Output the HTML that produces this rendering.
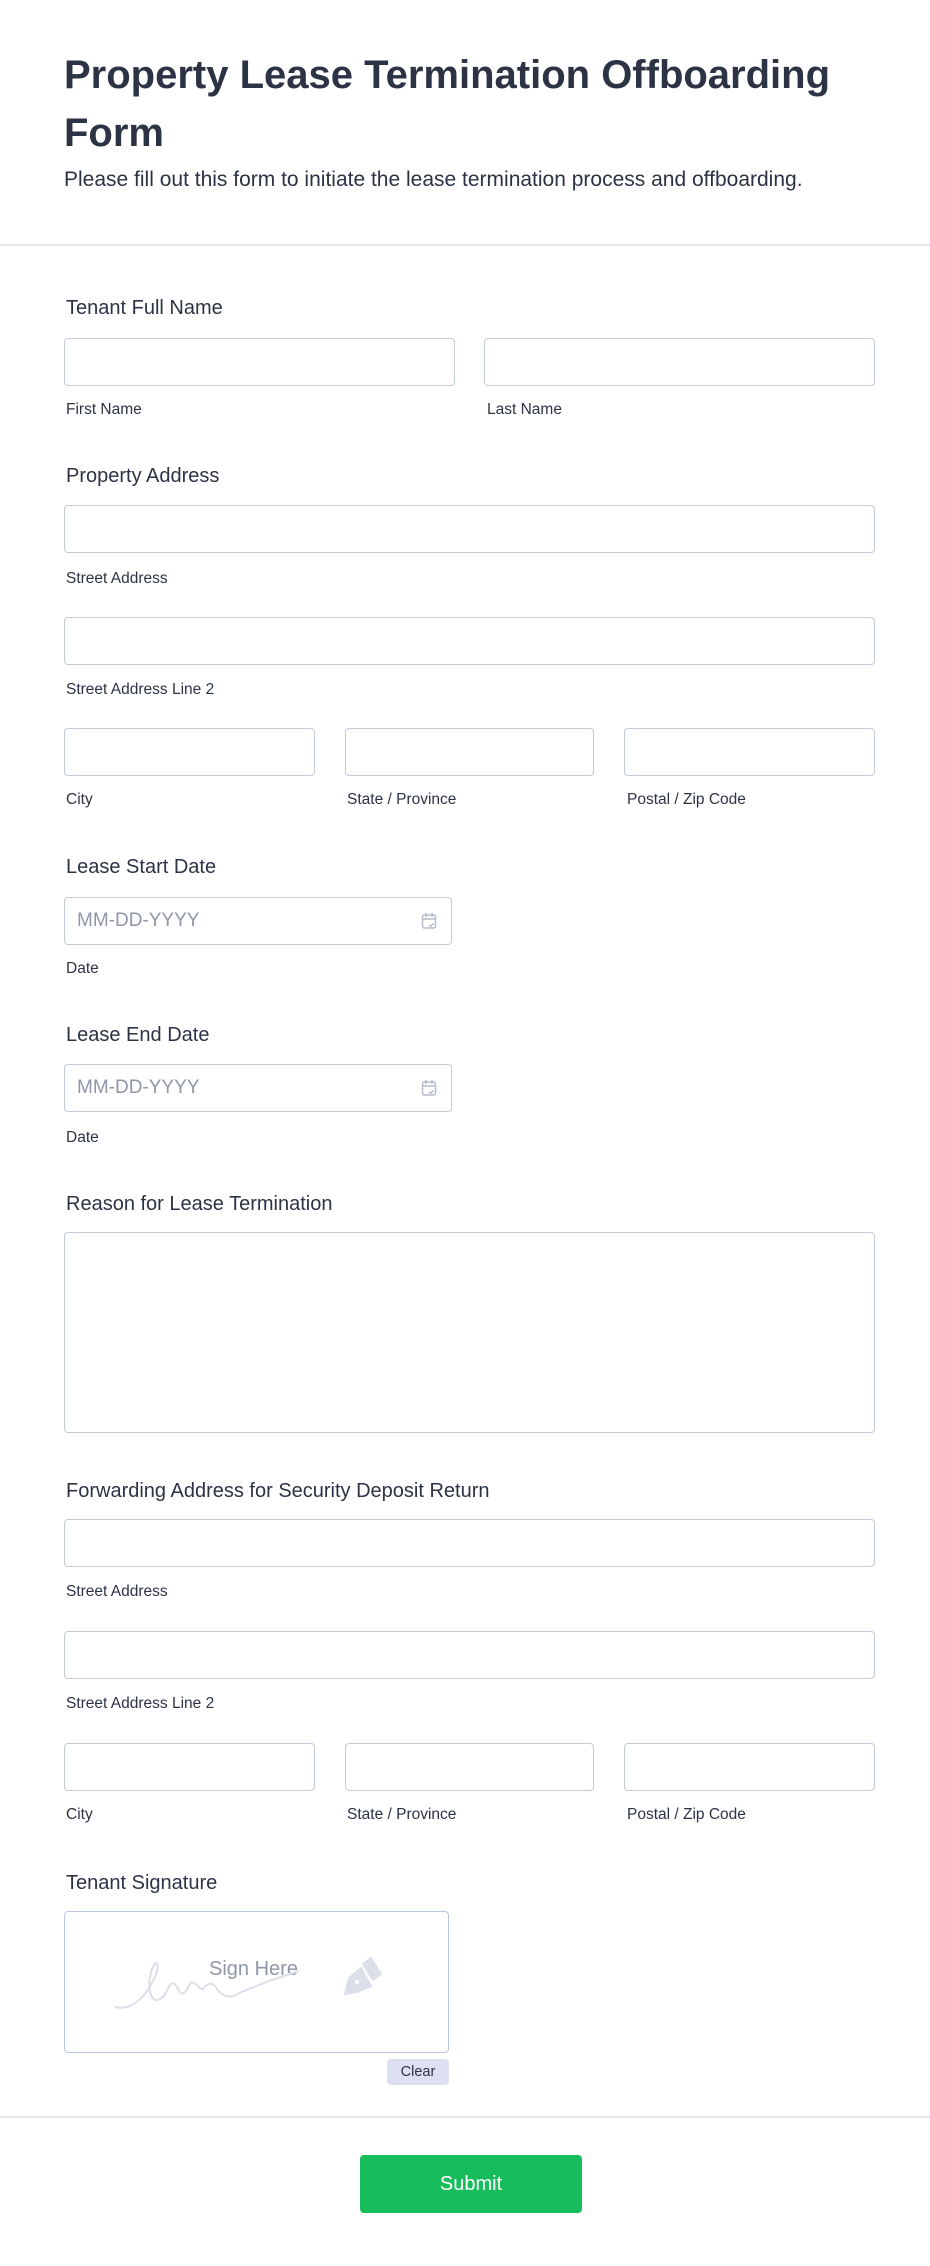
<!DOCTYPE html>
<html><head><meta charset="utf-8">
<style>
*{box-sizing:border-box;margin:0;padding:0}
body{width:930px;height:2266px;background:#fff;font-family:"Liberation Sans",Arial,sans-serif;color:#2c3345;position:relative;overflow:hidden}
.a{position:absolute}
h1{position:absolute;left:64px;top:46px;width:830px;font-size:40px;line-height:58px;font-weight:bold;color:#2c3345}
.sub{left:64px;top:166px;font-size:21px;line-height:28px;color:#2c3345}
.sep{left:0;width:930px;height:2px;background:#e3e6ee}
.lbl{font-size:20px;line-height:24px;left:66px;color:#2c3345}
.sl{font-size:15.5px;line-height:20px;color:#2c3345}
.in{border:1.5px solid #c3cad8;border-radius:4px;background:#fff}
.ph{font-size:19px;color:#8f96a8;line-height:48px;padding-left:12px}
</style></head><body>
<h1>Property Lease Termination Offboarding Form</h1>
<div class="a sub">Please fill out this form to initiate the lease termination process and offboarding.</div>
<div class="a sep" style="top:244px"></div>

<div class="a lbl" style="top:296px">Tenant Full Name</div>
<div class="a in" style="left:64px;top:338px;width:391px;height:48px"></div>
<div class="a in" style="left:484px;top:338px;width:391px;height:48px"></div>
<div class="a sl" style="left:66px;top:400px">First Name</div>
<div class="a sl" style="left:487px;top:400px">Last Name</div>

<div class="a lbl" style="top:464px">Property Address</div>
<div class="a in" style="left:64px;top:505px;width:811px;height:48px"></div>
<div class="a sl" style="left:66px;top:569px">Street Address</div>
<div class="a in" style="left:64px;top:617px;width:811px;height:48px"></div>
<div class="a sl" style="left:66px;top:680px">Street Address Line 2</div>
<div class="a in" style="left:64px;top:728px;width:251px;height:48px"></div>
<div class="a in" style="left:345px;top:728px;width:249px;height:48px"></div>
<div class="a in" style="left:624px;top:728px;width:251px;height:48px"></div>
<div class="a sl" style="left:66px;top:790px">City</div>
<div class="a sl" style="left:347px;top:790px">State / Province</div>
<div class="a sl" style="left:627px;top:790px">Postal / Zip Code</div>

<div class="a lbl" style="top:855px">Lease Start Date</div>
<div class="a in ph" style="left:64px;top:897px;width:388px;height:48px;line-height:45px">MM-DD-YYYY
<svg class="a" style="right:14px;top:14px" width="16" height="18" viewBox="0 0 16 18" fill="none" stroke="#b5bccb" stroke-width="1.5"><rect x="1.5" y="3" width="13" height="13" rx="2"/><path d="M1.5 7h13M5 1v4M11 1v4M8 13l1.5 1.5 3-3"/></svg></div>
<div class="a sl" style="left:66px;top:959px">Date</div>

<div class="a lbl" style="top:1023px">Lease End Date</div>
<div class="a in ph" style="left:64px;top:1064px;width:388px;height:48px;line-height:45px">MM-DD-YYYY
<svg class="a" style="right:14px;top:14px" width="16" height="18" viewBox="0 0 16 18" fill="none" stroke="#b5bccb" stroke-width="1.5"><rect x="1.5" y="3" width="13" height="13" rx="2"/><path d="M1.5 7h13M5 1v4M11 1v4M8 13l1.5 1.5 3-3"/></svg></div>
<div class="a sl" style="left:66px;top:1128px">Date</div>

<div class="a lbl" style="top:1192px">Reason for Lease Termination</div>
<div class="a in" style="left:64px;top:1232px;width:811px;height:201px"></div>

<div class="a lbl" style="top:1479px">Forwarding Address for Security Deposit Return</div>
<div class="a in" style="left:64px;top:1519px;width:811px;height:48px"></div>
<div class="a sl" style="left:66px;top:1582px">Street Address</div>
<div class="a in" style="left:64px;top:1631px;width:811px;height:48px"></div>
<div class="a sl" style="left:66px;top:1694px">Street Address Line 2</div>
<div class="a in" style="left:64px;top:1743px;width:251px;height:48px"></div>
<div class="a in" style="left:345px;top:1743px;width:249px;height:48px"></div>
<div class="a in" style="left:624px;top:1743px;width:251px;height:48px"></div>
<div class="a sl" style="left:66px;top:1805px">City</div>
<div class="a sl" style="left:347px;top:1805px">State / Province</div>
<div class="a sl" style="left:627px;top:1805px">Postal / Zip Code</div>

<div class="a lbl" style="top:1871px">Tenant Signature</div>
<div class="a in" style="left:64px;top:1911px;width:385px;height:142px;border-color:#b8c6e0">
<div class="a" style="left:144px;top:46px;font-size:20px;color:#8f96a8">Sign Here</div>
<svg class="a" style="left:48px;top:40px" width="300" height="70" viewBox="0 0 300 70" fill="none" stroke="#dcdfea" stroke-width="2"><path d="M2 55c15 4 30-8 40-30 6-14 0-20-4-5-4 18 0 35 12 25 6-8 8-20 14-10 4 10 8 8 12-2 5-8 10 6 14 4 5-6 10-8 14 0 6 8 14 10 22 4l30-12 30-10"/><path d="M232 42l4-16 12-10 10 18-14 6z" fill="#dcdfea"/><path d="M250 12l8-6 10 16-8 6z" fill="#dcdfea"/><circle cx="244" cy="30" r="3" fill="#fff"/></svg>
</div>
<div class="a" style="left:387px;top:2059px;width:62px;height:26px;background:#dde0f1;border-radius:4px;font-size:14.5px;line-height:26px;text-align:center;color:#2c3345">Clear</div>

<div class="a sep" style="top:2116px"></div>
<div class="a" style="left:360px;top:2155px;width:222px;height:58px;background:#18bd5b;border-radius:4px;color:#fff;font-size:20px;line-height:58px;text-align:center">Submit</div>
</body></html>
